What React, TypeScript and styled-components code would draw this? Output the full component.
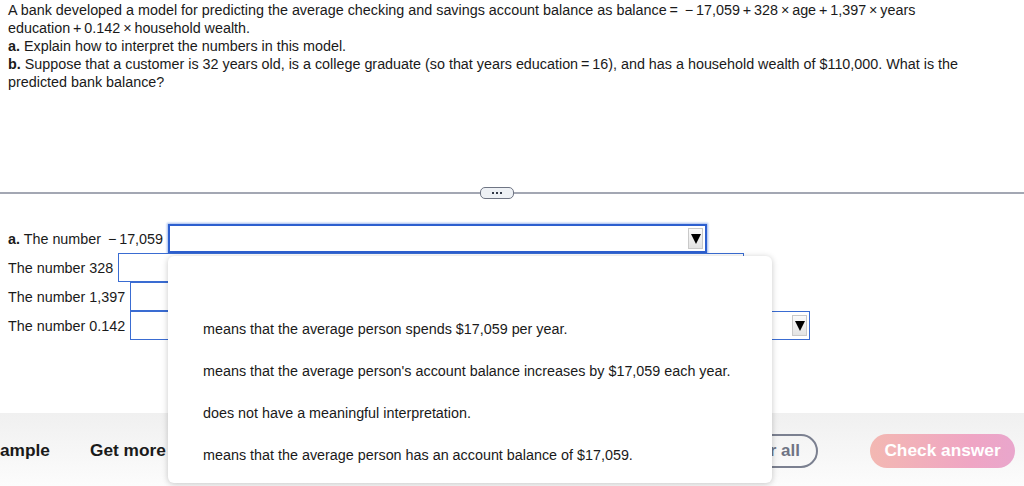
import React from "react";
import styled, { createGlobalStyle } from "styled-components";

const Global = createGlobalStyle`
  html, body { margin: 0; padding: 0; background: #fff; }
  body { font-family: "Liberation Sans", Arial, sans-serif; color: #1a1a1a; }
  #root { width: 1024px; height: 486px; overflow: hidden; }
`;

const Page = styled.div`
  width: 1024px;
  height: 486px;
  display: flex;
  flex-direction: column;
  position: relative;
  overflow: hidden;
`;

const Question = styled.div`
  width: 962px;
  padding: 1px 0 0 8px;
  font-size: 14.35px;
  line-height: 18px;
  color: #1a1a1a;
`;

const Para = styled.p`
  margin: 0;
`;

const Divider = styled.div`
  display: grid;
  grid-template-columns: 480px auto 1fr;
  align-items: center;
  margin-top: 95px;
  height: 14px;
`;

const Line = styled.div`
  height: 2px;
  background: #a3a7b3;
`;

const Handle = styled.div`
  width: 32px;
  height: 10px;
  border: 1px solid #6f7584;
  border-radius: 5px;
  background: #eef1f5;
  display: flex;
  align-items: center;
  justify-content: center;
  gap: 2px;
`;

const Dot = styled.span`
  width: 2px;
  height: 2px;
  background: #333a48;
`;

const Rows = styled.div`
  display: flex;
  flex-direction: column;
  margin-top: 24px;
  padding-left: 8px;
  font-size: 14.35px;
`;

const Row = styled.div`
  display: flex;
  align-items: center;
  height: 29px;
  gap: 5px;
`;

const Label = styled.span`
  white-space: nowrap;
`;

const SelectBox = styled.div<{ $w: number; $focus?: boolean }>`
  position: relative;
  width: ${(p) => p.$w}px;
  height: 29px;
  box-sizing: border-box;
  border: ${(p) => (p.$focus ? "2px solid #2d5fcf" : "1px solid #3a6cd2")};
  box-shadow: ${(p) => (p.$focus ? "0 0 2px 1px #9db8ee" : "none")};
  background: #fff;
  display: flex;
  align-items: center;
  justify-content: flex-end;
  padding-right: 2px;
`;

const Arrow = styled.div`
  width: 15px;
  height: 21px;
  box-sizing: border-box;
  border: 1px solid #c9c9c9;
  background: linear-gradient(#fbfbfb, #e3e3e3);
  display: flex;
  align-items: center;
  justify-content: center;
`;

const Tri = styled.span`
  width: 0;
  height: 0;
  border-left: 5px solid transparent;
  border-right: 5px solid transparent;
  border-top: 10px solid #000;
`;

const Menu = styled.div`
  position: absolute;
  left: -2px;
  top: 30px;
  width: 604px;
  height: 227px;
  box-sizing: border-box;
  background: #fff;
  border-radius: 6px;
  box-shadow: 0 1px 6px rgba(0, 0, 0, 0.22);
  padding: 10px 0 7px 0;
  z-index: 10;
  display: flex;
  flex-direction: column;
`;

const Option = styled.div`
  height: 42.3px;
  display: flex;
  align-items: center;
  padding-left: 35px;
  font-size: 14.35px;
  color: #1a1a1a;
  white-space: nowrap;
`;

const Spacer = styled.div`
  flex: 1;
`;

const Bar = styled.div`
  height: 73px;
  box-sizing: border-box;
  background: linear-gradient(#f0f0f0, #fcfcfc);
  display: flex;
  align-items: center;
  padding: 2px 9px 0 0;
`;

const BarLink = styled.span`
  font-size: 17.3px;
  font-weight: bold;
  color: #1a1a1a;
  margin-right: 40px;
  white-space: nowrap;
`;

const ClearBtn = styled.div`
  margin-left: auto;
  height: 34px;
  box-sizing: border-box;
  border: 2px solid #7b8090;
  border-radius: 17px;
  padding: 0 16px;
  display: flex;
  align-items: center;
  font-size: 17px;
  font-weight: bold;
  color: #6f7484;
  white-space: nowrap;
`;

const CheckBtn = styled.div`
  margin-left: 52px;
  width: 145px;
  height: 34px;
  border-radius: 17px;
  background: linear-gradient(90deg, #f3b8b2, #efa5c4 70%, #e9a6cc);
  display: flex;
  align-items: center;
  justify-content: center;
  font-size: 17.3px;
  font-weight: bold;
  color: #fff;
  white-space: nowrap;
`;

const options = [
  "",
  "means that the average person spends $17,059 per year.",
  "means that the average person's account balance increases by $17,059 each year.",
  "does not have a meaningful interpretation.",
  "means that the average person has an account balance of $17,059.",
];

const t = "\u2009";

export default function App() {
  return (
    <Page>
      <Global />
      <Question>
        <Para>
          A bank developed a model for predicting the average checking and savings account balance as balance{t}= {t}−{t}17,059{t}+{t}328{t}×{t}age{t}+{t}1,397{t}×{t}years education{t}+{t}0.142{t}×{t}household wealth.
        </Para>
        <Para>
          <b>a.</b> Explain how to interpret the numbers in this model.
        </Para>
        <Para>
          <b>b.</b> Suppose that a customer is 32 years old, is a college graduate (so that years education{t}={t}16), and has a household wealth of $110,000. What is the predicted bank balance?
        </Para>
      </Question>
      <Divider>
        <Line />
        <Handle>
          <Dot />
          <Dot />
          <Dot />
        </Handle>
        <Line />
      </Divider>
      <Rows>
        <Row>
          <Label>
            <b>a.</b> The number {t}−{t}17,059
          </Label>
          <SelectBox $w={539} $focus>
            <Arrow>
              <Tri />
            </Arrow>
            <Menu>
              {options.map((o, i) => (
                <Option key={i}>{o}</Option>
              ))}
            </Menu>
          </SelectBox>
        </Row>
        <Row>
          <Label>The number 328</Label>
          <SelectBox $w={626}>
            <Arrow>
              <Tri />
            </Arrow>
          </SelectBox>
        </Row>
        <Row>
          <Label>The number 1,397</Label>
          <SelectBox $w={620}>
            <Arrow>
              <Tri />
            </Arrow>
          </SelectBox>
        </Row>
        <Row>
          <Label>The number 0.142</Label>
          <SelectBox $w={680}>
            <Arrow>
              <Tri />
            </Arrow>
          </SelectBox>
        </Row>
      </Rows>
      <Spacer />
      <Bar>
        <BarLink>ample</BarLink>
        <BarLink>Get more help</BarLink>
        <ClearBtn>Clear all</ClearBtn>
        <CheckBtn>Check answer</CheckBtn>
      </Bar>
    </Page>
  );
}
